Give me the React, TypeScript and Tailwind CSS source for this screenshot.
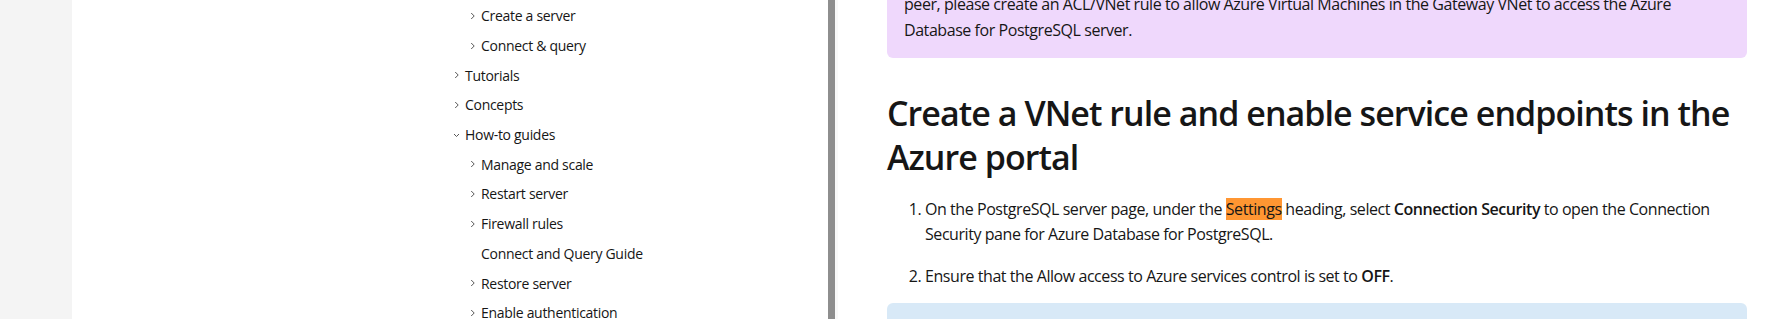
import type { ReactNode } from 'react'

type NavItem = { label: string; level: 1 | 2; icon: 'right' | 'down' | 'none' }

const navItems: NavItem[] = [
  { label: 'Create a server', level: 2, icon: 'right' },
  { label: 'Connect & query', level: 2, icon: 'right' },
  { label: 'Tutorials', level: 1, icon: 'right' },
  { label: 'Concepts', level: 1, icon: 'right' },
  { label: 'How-to guides', level: 1, icon: 'down' },
  { label: 'Manage and scale', level: 2, icon: 'right' },
  { label: 'Restart server', level: 2, icon: 'right' },
  { label: 'Firewall rules', level: 2, icon: 'right' },
  { label: 'Connect and Query Guide', level: 2, icon: 'none' },
  { label: 'Restore server', level: 2, icon: 'right' },
  { label: 'Enable authentication', level: 2, icon: 'right' },
]

function Chevron({ dir }: { dir: 'right' | 'down' | 'none' }) {
  if (dir === 'none') return <span className="w-[12px] shrink-0" />
  return (
    <span className="w-[12px] shrink-0 flex items-center">
      <svg width="8" height="8" viewBox="0 0 8 8" fill="none" stroke="#444" strokeWidth="0.9">
        {dir === 'right' ? <path d="M2.2 1 L5.2 4 L2.2 7" /> : <path d="M1 3 L3.5 5.5 L6 3" />}
      </svg>
    </span>
  )
}

function Sidebar() {
  return (
    <nav className="w-[756px] shrink-0 bg-white pl-[381px] pt-[1px] text-[14px] tracking-[-0.3px] text-[#161616]">
      {navItems.map((item) => (
        <div
          key={item.label}
          className={`flex items-center h-[29.7px] ${item.level === 2 ? 'pl-[16px]' : ''}`}
        >
          <Chevron dir={item.icon} />
          <span className="whitespace-nowrap">{item.label}</span>
        </div>
      ))}
    </nav>
  )
}

function B({ children }: { children: ReactNode }) {
  return <strong className="font-semibold">{children}</strong>
}

function Article() {
  return (
    <main className="flex-1 pl-[49px] text-[16px] leading-[25.6px] tracking-[-0.44px] text-[#161616]">
      <div className="w-[860px] mt-[-22px] rounded-md bg-[#efd8fc] pl-[17px] pr-[14px] pt-[14px] pb-[15px]">
        <p>
          peer, please create an ACL/VNet rule to allow Azure Virtual Machines in the Gateway VNet to access the Azure
          Database for PostgreSQL server.
        </p>
      </div>

      <h2 className="w-[860px] mt-[33px] text-[34px] leading-[44px] tracking-[-0.95px] font-semibold">
        Create a VNet rule and enable service endpoints in the Azure portal
      </h2>

      <ol className="w-[860px] mt-[18px] pl-[38px] list-decimal leading-[25px]">
        <li>
          On the PostgreSQL server page, under the <span className="bg-[#ff9632]">Settings</span> heading, select{' '}
          <B>Connection Security</B> to open the Connection Security pane for Azure Database for PostgreSQL.
        </li>
        <li className="mt-[17px]">
          Ensure that the Allow access to Azure services control is set to <B>OFF</B>.
        </li>
      </ol>

      <div className="w-[860px] mt-[14px] h-[60px] rounded-t-md bg-[#d8e9f7]" />
    </main>
  )
}

export default function App() {
  return (
    <div
      className="h-[319px] w-full overflow-hidden flex bg-white"
      style={{ fontFamily: '"Segoe UI", "Open Sans", sans-serif' }}
    >
      <div className="w-[72px] shrink-0 bg-[#f4f4f4]" />
      <Sidebar />
      <div className="w-[7px] shrink-0 bg-[#8e8e8e]" />
      <div className="w-[3px] shrink-0 bg-[#f9f9f9]" />
      <Article />
    </div>
  )
}
